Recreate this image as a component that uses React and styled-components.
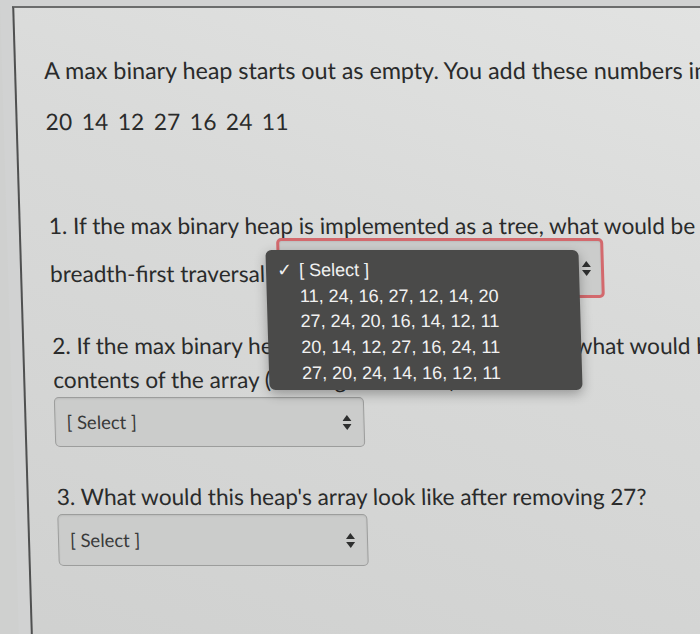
import React from 'react'
import styled, { createGlobalStyle, css } from 'styled-components'

const GlobalStyle = createGlobalStyle`
  html, body {
    margin: 0;
    padding: 0;
    width: 700px;
    height: 634px;
    overflow: hidden;
    background: #cfd0cf;
  }
  body {
    font-family: Lato, "Open Sans", sans-serif;
    color: #2a2b2b;
  }
`

// the photo is taken at a slight angle, so the whole screen leans a little
const Frame = styled.div`
  width: 760px;
  height: 680px;
  box-sizing: border-box;
  padding: 6px 0 0 12px;
  display: flex;
  background: #d1d2d2;
  transform: skewX(1.7deg);
  transform-origin: 0 0;
`

const Panel = styled.main`
  flex: 1;
  border-top: 2px solid #6b6c6c;
  border-left: 2px solid #4f5050;
  background: linear-gradient(200deg, #e3e4e3 0%, #d9dad9 40%, #cfd0cf 100%);
  padding: 45px 0 0 28px;
  white-space: nowrap;
`

const Intro = styled.p`
  margin: ${p => p.gap || 0}px 0 0;
  font-size: 23.3px;
  line-height: 34px;
  ${p => p.digits && css`
    font-size: 22.7px;
    word-spacing: 3px;
    letter-spacing: 0.3px;
  `}
`

const Question = styled.div`
  margin-top: ${p => p.gap}px;
  font-size: 22.6px;
  line-height: 34px;
`

const InlineRow = styled.div`
  display: flex;
  align-items: center;
  gap: 12px;
  height: 60px;
  margin-top: -5px;
`

const RowText = styled.span`
  padding-top: 12px;
`

const SelectBox = styled.div`
  position: relative;
  display: flex;
  align-items: center;
  justify-content: space-between;
  box-sizing: border-box;
  width: ${p => p.w}px;
  height: ${p => p.h}px;
  padding: 0 12px 0 11px;
  border: 1px solid #9c9d9c;
  border-radius: 5px;
  background: #cbcccb;
  box-shadow: inset 0 1px 2px rgba(0, 0, 0, 0.08);
  font-size: 18.5px;
  line-height: 1;
  color: #393a3a;
  ${p => p.invalid && css`
    border: 3px solid #d3696d;
    padding-right: 10px;
  `}
`

const Menu = styled.ul`
  position: absolute;
  left: -14px;
  top: 9px;
  z-index: 2;
  width: 313px;
  box-sizing: border-box;
  margin: 0;
  padding: 7px 0 5px;
  list-style: none;
  background: #4a4a49;
  border-radius: 6px;
  box-shadow: 0 4px 12px rgba(0, 0, 0, 0.3);
  font-family: "Liberation Sans", Arial, sans-serif;
  font-size: 18px;
  color: #f1f1f1;
`

const MenuItem = styled.li`
  display: flex;
  align-items: center;
  height: 25.7px;
  padding-left: 11px;
`

const Check = styled.span`
  width: 22px;
  flex: none;
  font-family: "DejaVu Sans", sans-serif;
  font-size: 18px;
  font-weight: bold;
`

const Arrows = () => (
  <svg width="9" height="15" viewBox="0 0 9 15">
    <polygon points="0,6 4.5,0 9,6" fill="#2e2f2f" />
    <polygon points="0,9 4.5,15 9,9" fill="#2e2f2f" />
  </svg>
)

const options = [
  '[ Select ]',
  '11, 24, 16, 27, 12, 14, 20',
  '27, 24, 20, 16, 14, 12, 11',
  '20, 14, 12, 27, 16, 24, 11',
  '27, 20, 24, 14, 16, 12, 11',
]

export default function App() {
  return (
    <>
      <GlobalStyle />
      <Frame>
        <Panel>
          <Intro>A max binary heap starts out as empty. You add these numbers in this order:</Intro>
          <Intro gap={18} digits>20 14 12 27 16 24 11</Intro>

          <Question gap={70}>
            <div>1. If the max binary heap is implemented as a tree, what would be the result of a</div>
            <InlineRow>
              <RowText>breadth-first traversal</RowText>
              <SelectBox w={327} h={60} invalid>
                <span />
                <Arrows />
                <Menu>
                  {options.map((o, i) => (
                    <MenuItem key={o}>
                      <Check>{i === 0 ? '✓' : ''}</Check>
                      {o}
                    </MenuItem>
                  ))}
                </Menu>
              </SelectBox>
            </InlineRow>
          </Question>

          <Question gap={31}>
            <div>2. If the max binary heap is implemented as an array, what would be the</div>
            <div>contents of the array (starting at index 0)?</div>
            <SelectBox w={310} h={50}>
              <span>[ Select ]</span>
              <Arrows />
            </SelectBox>
          </Question>

          <Question gap={33}>
            <div>3. What would this heap's array look like after removing 27?</div>
            <SelectBox w={310} h={52}>
              <span>[ Select ]</span>
              <Arrows />
            </SelectBox>
          </Question>
        </Panel>
      </Frame>
    </>
  )
}
